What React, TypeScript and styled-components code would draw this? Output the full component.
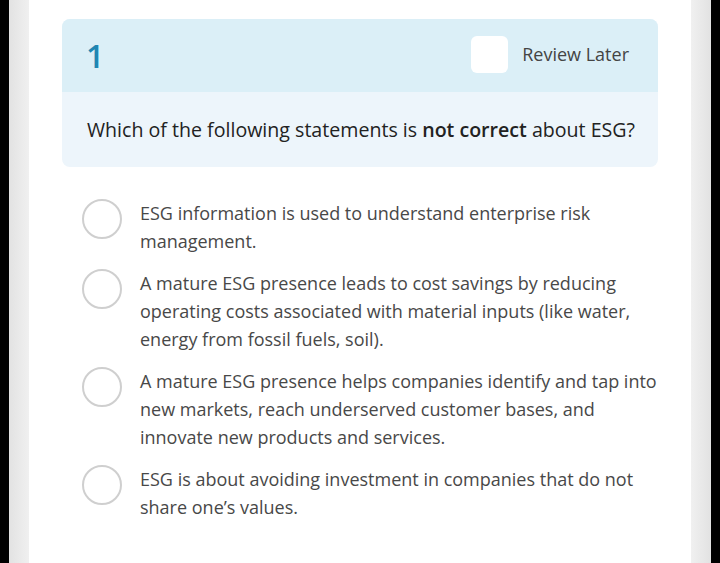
import styled, { createGlobalStyle } from 'styled-components';

const GlobalStyle = createGlobalStyle`
  html, body {
    margin: 0;
    padding: 0;
    background: #000;
  }
  body {
    font-family: 'Open Sans', 'Noto Sans', sans-serif;
  }
`;

const Screen = styled.div`
  display: flex;
  height: 563px;
  overflow: hidden;
`;

const Edge = styled.div`
  width: 9px;
  background: #000;
`;

const Rim = styled.div<{ $side: 'left' | 'right' }>`
  width: 20px;
  background: ${({ $side }) =>
    $side === 'left'
      ? 'linear-gradient(to right, #e2e2e2, #f0f0f0)'
      : 'linear-gradient(to left, #e2e2e2, #f0f0f0)'};
`;

const Page = styled.main`
  flex: 1;
  background: #fff;
  padding: 19px 33px 0;
`;

const Card = styled.section`
  border-radius: 8px;
  overflow: hidden;
  background: #edf5fb;
`;

const CardHeader = styled.header`
  height: 73px;
  display: flex;
  align-items: center;
  justify-content: space-between;
  padding: 0 29px 0 24px;
  background: #dbeff7;
`;

const Number = styled.span`
  font-size: 32px;
  font-weight: 600;
  color: #1f86b2;
  line-height: 1;
`;

const ReviewLater = styled.label`
  display: flex;
  align-items: center;
  gap: 14px;
  font-size: 18px;
  color: #444;
  margin-bottom: 3px;
`;

const Box = styled.span`
  width: 37px;
  height: 37px;
  border-radius: 6px;
  background: #fff;
`;

const Question = styled.div`
  height: 75px;
  display: flex;
  align-items: center;
  padding: 0 8px 0 25px;
  font-size: 19.6px;
  color: #222;
  white-space: nowrap;

  & b {
    font-weight: 600;
  }
`;

const Options = styled.ul`
  list-style: none;
  margin: 32px 0 0;
  padding: 0 0 0 20px;
  display: flex;
  flex-direction: column;
  gap: 14px;
`;

const Option = styled.li`
  display: flex;
  align-items: flex-start;
  gap: 18px;
`;

const Radio = styled.span`
  flex: none;
  width: 40px;
  height: 40px;
  box-sizing: border-box;
  border: 2.5px solid #cfcfcf;
  border-radius: 50%;
`;

const OptionText = styled.span`
  font-size: 18px;
  line-height: 28px;
  color: #484848;
`;

const answers = [
  'ESG information is used to understand enterprise risk management.',
  'A mature ESG presence leads to cost savings by reducing operating costs associated with material inputs (like water, energy from fossil fuels, soil).',
  'A mature ESG presence helps companies identify and tap into new markets, reach underserved customer bases, and innovate new products and services.',
  'ESG is about avoiding investment in companies that do not share one\u2019s values.',
];

export default function App() {
  return (
    <>
      <GlobalStyle />
      <Screen>
        <Edge />
        <Rim $side="left" />
        <Page>
          <Card>
            <CardHeader>
              <Number>1</Number>
              <ReviewLater>
                <Box />
                Review Later
              </ReviewLater>
            </CardHeader>
            <Question>
              <span>
                Which of the following statements is <b>not correct</b> about ESG?
              </span>
            </Question>
          </Card>
          <Options>
            {answers.map((a) => (
              <Option key={a}>
                <Radio />
                <OptionText>{a}</OptionText>
              </Option>
            ))}
          </Options>
        </Page>
        <Rim $side="right" />
        <Edge />
      </Screen>
    </>
  );
}
